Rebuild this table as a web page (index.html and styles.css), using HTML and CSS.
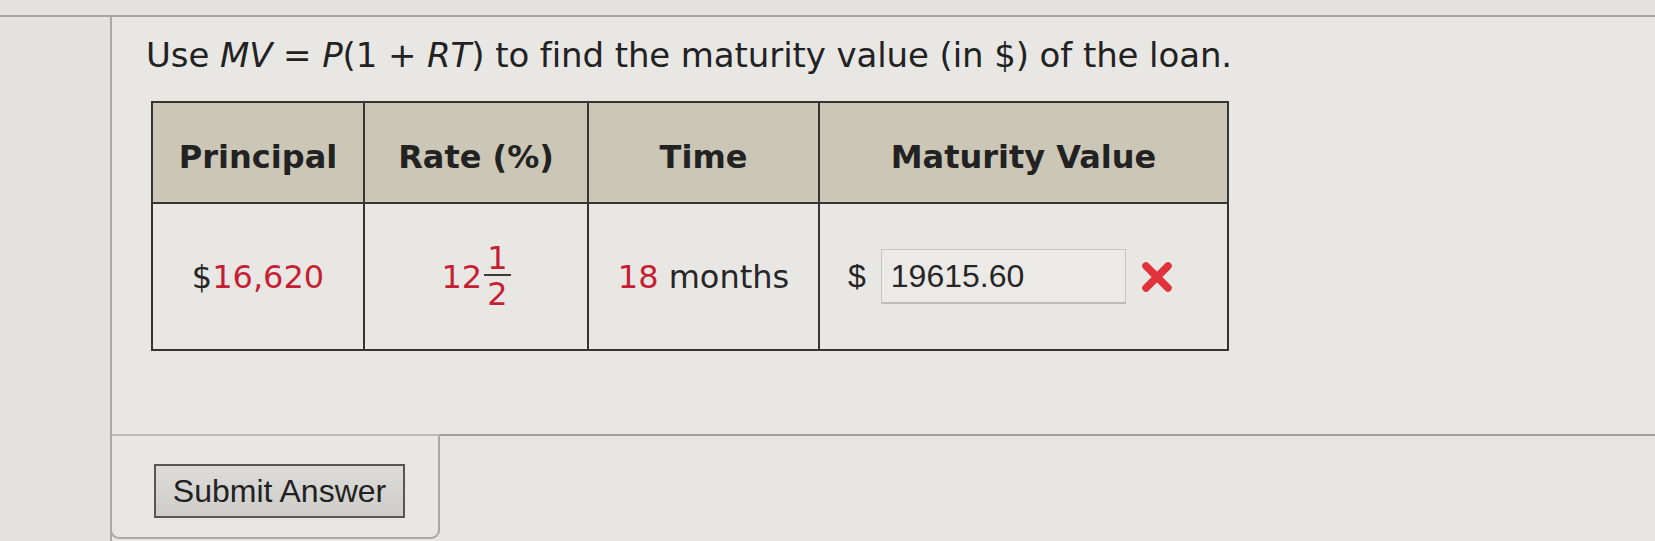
FILE: index.html
```html
<!DOCTYPE html>
<html lang="en">
<head>
<meta charset="utf-8">
<title>Maturity value</title>
<link rel="stylesheet" href="styles.css">
</head>
<body>
<div class="screen">
  <div class="topbar"></div>
  <div class="panel">
    <div class="question">
      <p class="prompt">Use <i>MV</i> = <i>P</i>(1 + <i>RT</i>) to find the maturity value (in $) of the loan.</p>
      <table class="loan">
        <colgroup>
          <col class="c1"><col class="c2"><col class="c3"><col class="c4">
        </colgroup>
        <thead>
          <tr><th>Principal</th><th>Rate (%)</th><th>Time</th><th>Maturity Value</th></tr>
        </thead>
        <tbody>
          <tr>
            <td>$<span class="num">16,620</span></td>
            <td><span class="mixed"><span class="num">12</span><span class="frac"><span class="num top">1</span><span class="num bot">2</span></span></span></td>
            <td><span class="num">18</span> months</td>
            <td class="answer">
              <div class="answer-row">
                <span class="cur">$</span>
                <span class="field">19615.60</span>
                <svg class="wrong" viewBox="0 0 34 32" width="34" height="32" aria-label="incorrect">
                  <path d="M6 5 L28 27 M28 5 L6 27" stroke="#e2333c" stroke-width="7.5" stroke-linecap="round" fill="none"/>
                </svg>
              </div>
            </td>
          </tr>
        </tbody>
      </table>
    </div>
    <div class="footer">
      <div class="tab"><button class="submit" type="button">Submit Answer</button></div>
      <div class="rest"></div>
    </div>
  </div>
</div>
</body>
</html>
```

FILE: styles.css
```css
html, body {
  margin: 0;
  padding: 0;
  background: #e4e2de;
}
body {
  width: 1655px;
  height: 541px;
  overflow: hidden;
  font-family: "DejaVu Sans", Verdana, sans-serif;
  color: #2a2a2a;
}
.screen {
  display: flex;
  flex-direction: column;
  height: 541px;
}
.topbar {
  height: 15px;
  border-bottom: 2px solid #a7a5a1;
  flex: none;
}
.panel {
  margin-left: 110px;
  border-left: 2px solid #aaa8a4;
  background: #e9e7e4;
  flex: 1;
  display: flex;
  flex-direction: column;
}
.question {
  height: 417px;
  padding: 18px 0 0 34px;
  box-sizing: border-box;
}
.prompt {
  margin: 0;
  font-size: 34px;
  line-height: 40px;
  color: #222;
  letter-spacing: -0.1px;
}
.prompt i {
  font-style: oblique;
}
.loan {
  margin: 26px 0 0 5px;
  border-collapse: collapse;
  table-layout: fixed;
  width: 1076px;
}
.c1 { width: 212px; }
.c2 { width: 224px; }
.c3 { width: 231px; }
.c4 { width: 409px; }
.loan th, .loan td {
  border: 2px solid #363533;
  text-align: center;
  padding: 0;
}
.loan th {
  background: #cbc6b6;
  height: 101px;
  box-sizing: border-box;
  padding-top: 8px;
  font-size: 32px;
  font-weight: bold;
  color: #222;
}
.loan td {
  height: 145px;
  font-size: 32px;
  color: #262626;
}
.num {
  color: #c61f33;
}
.mixed {
  display: inline-flex;
  align-items: center;
  vertical-align: middle;
}
.frac {
  display: inline-flex;
  flex-direction: column;
  align-items: center;
  margin-left: 2px;
}
.frac .top {
  line-height: 30px;
  padding: 0 3px 1px;
  border-bottom: 2px solid #3b3a38;
}
.frac .bot {
  line-height: 34px;
  padding-top: 1px;
}
.loan td.answer {
  text-align: left;
}
.answer-row {
  display: flex;
  align-items: center;
  padding-left: 28px;
  font-family: "Liberation Sans", Arial, sans-serif;
}
.cur {
  font-size: 32px;
  color: #262626;
}
.field {
  margin-left: 15px;
  width: 245px;
  height: 55px;
  box-sizing: border-box;
  border: 1px solid #c6c4c0;
  border-bottom: 2px solid #bdbbb7;
  background: #eceae7;
  padding-left: 9px;
  display: flex;
  align-items: center;
  font-size: 32px;
  color: #262626;
}
.wrong {
  margin-left: 14px;
  flex: none;
}
.footer {
  flex: 1;
  display: flex;
}
.tab {
  width: 330px;
  height: 105px;
  margin-left: -2px;
  border-top: 2px solid #bdbbb7;
  border-left: 2px solid #aaa8a4;
  border-right: 2px solid #a9a7a3;
  border-bottom: 2px solid #aaa8a4;
  border-bottom-left-radius: 9px;
  border-bottom-right-radius: 9px;
  box-sizing: border-box;
  padding: 28px 0 0 42px;
  flex: none;
}
.rest {
  flex: 1;
  border-top: 2px solid #a09e9a;
  background: #e7e5e1;
}
.submit {
  width: 251px;
  height: 54px;
  margin: 0;
  padding: 0;
  border: 2px solid #575654;
  background: linear-gradient(#dcdbd8, #cecdca);
  font-family: "Liberation Sans", Arial, sans-serif;
  font-size: 32px;
  color: #222;
}
```
